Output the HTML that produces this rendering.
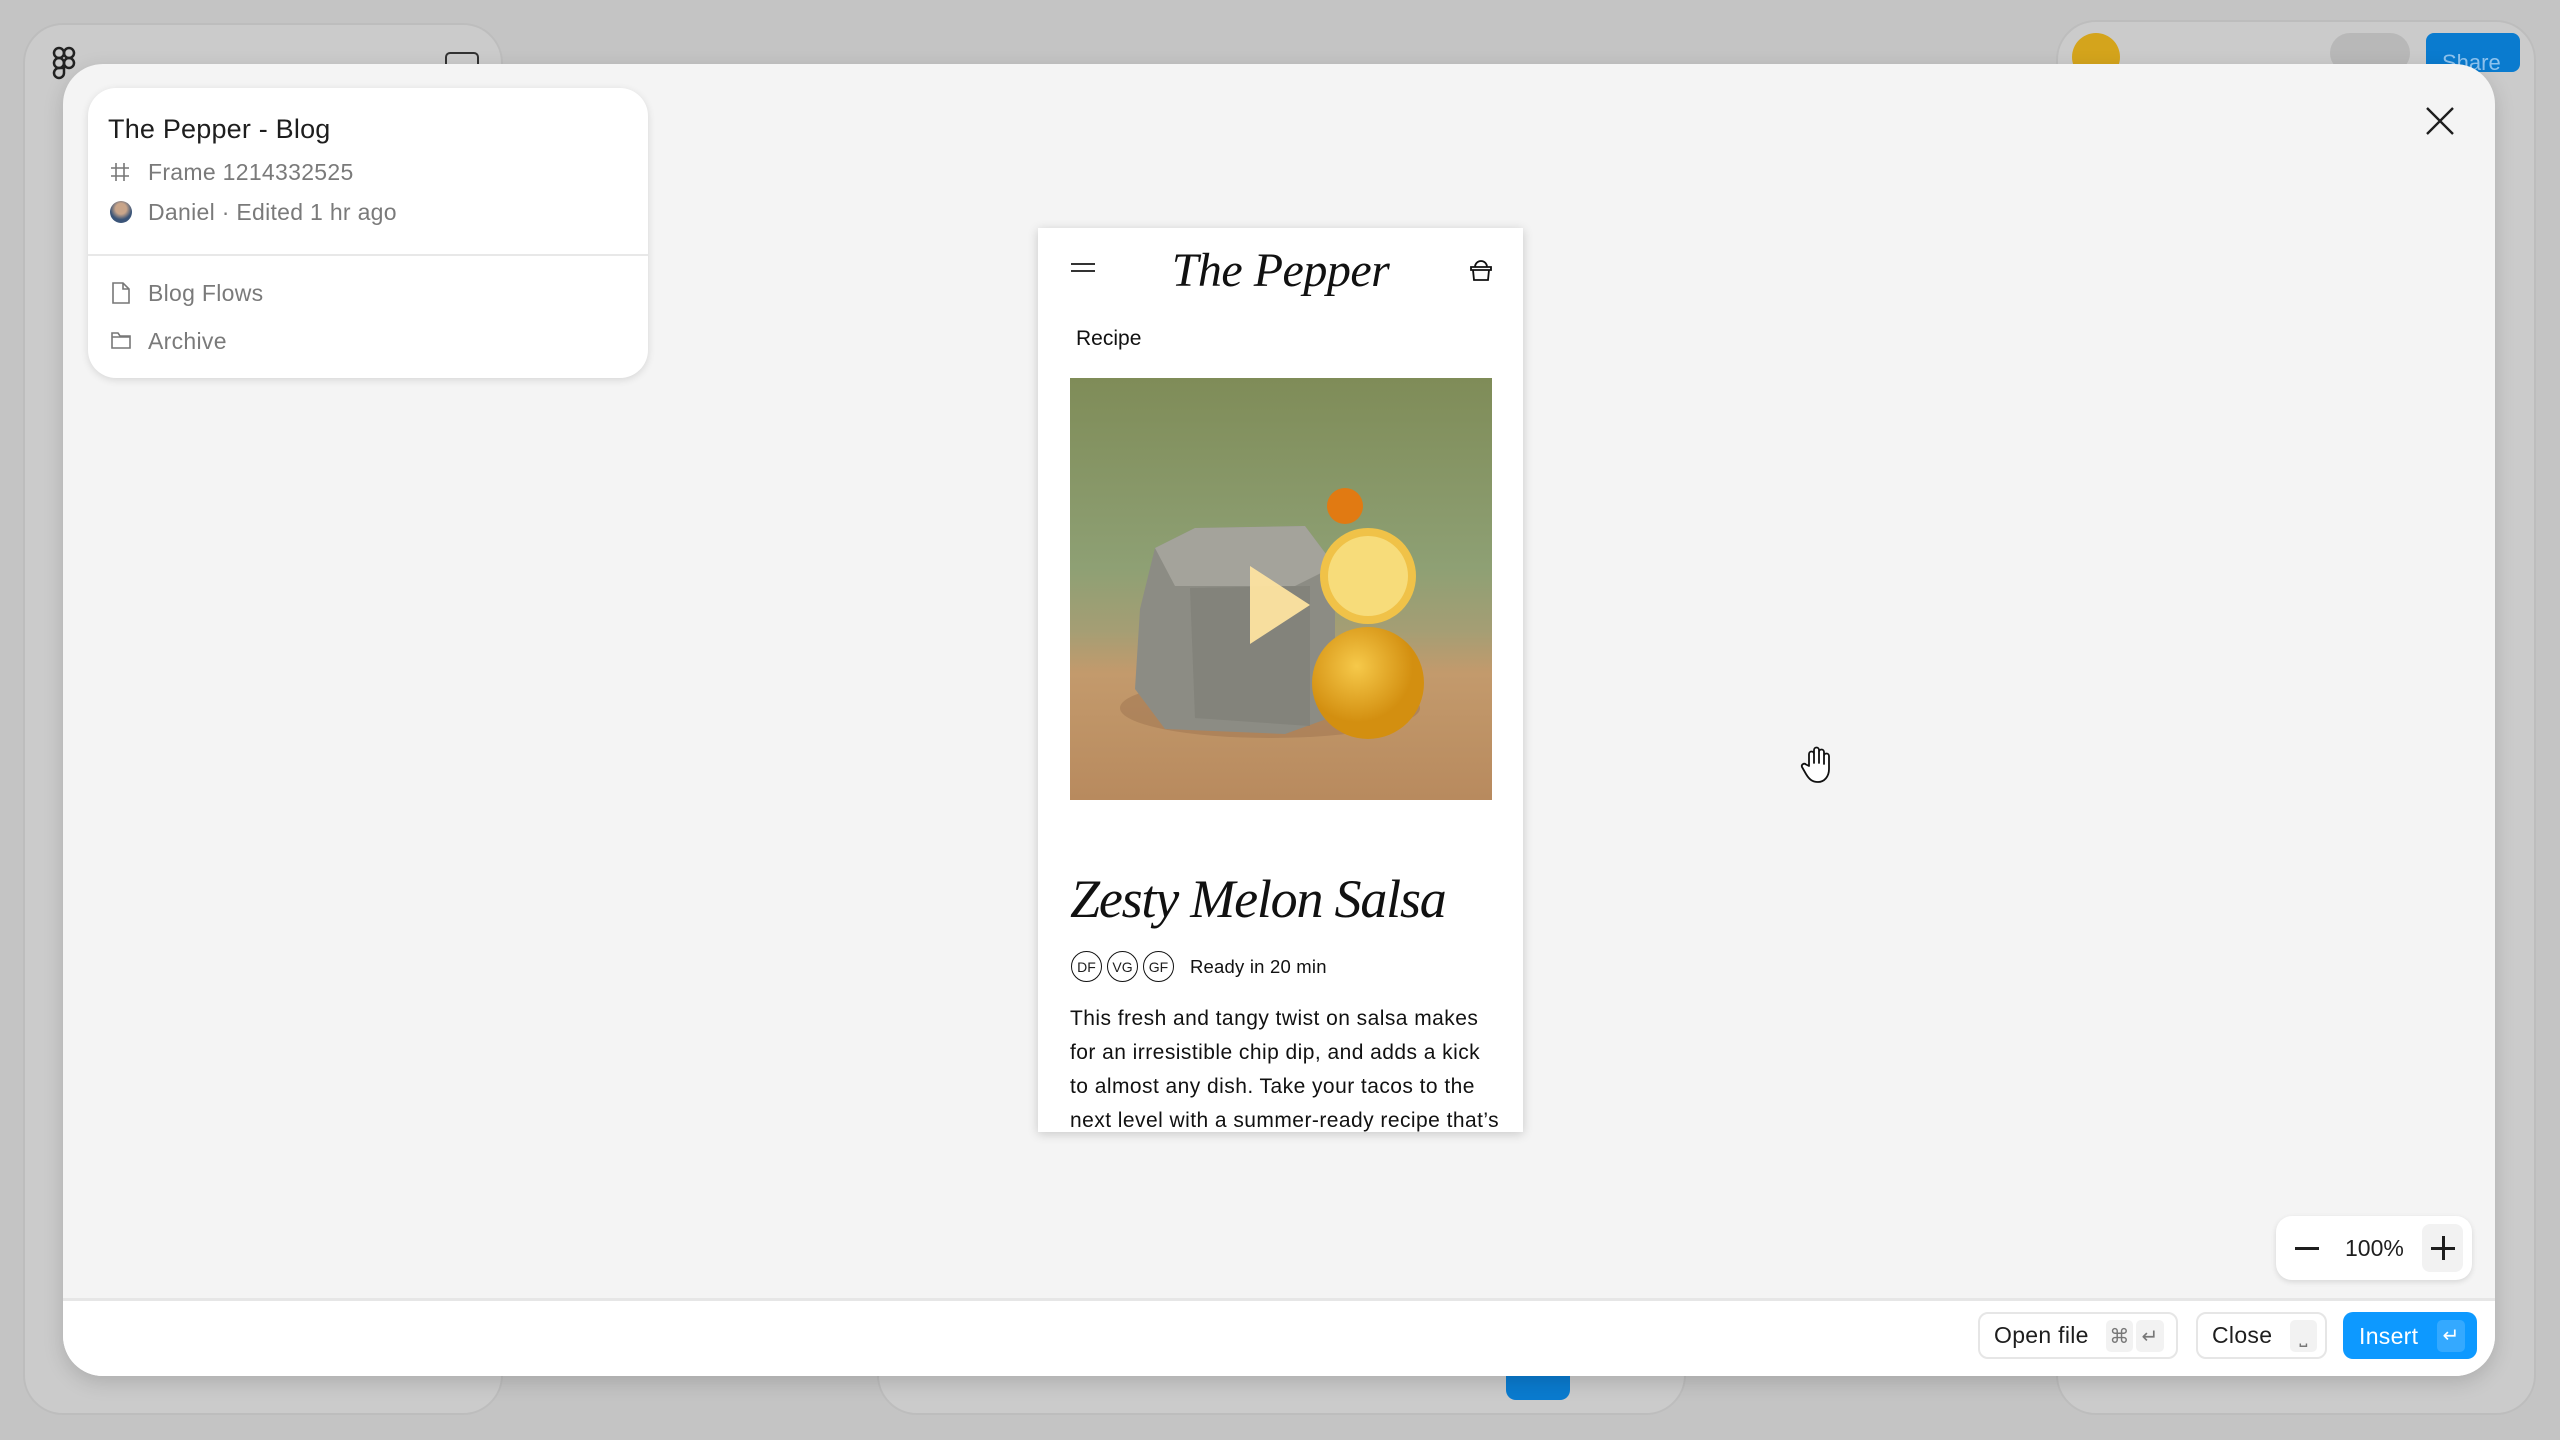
<!DOCTYPE html>
<html><head><meta charset="utf-8"><style>
*{margin:0;padding:0;box-sizing:border-box}
body{width:2560px;height:1440px;background:#c4c4c4;position:relative;overflow:hidden;font-family:"Liberation Sans",sans-serif;color:#1e1e1e}
.abs{position:absolute}
.panel{background:#cbcbcb;border:2px solid #bdbdbd;}
.modal{left:63px;top:64px;width:2432px;height:1312px;background:#f4f4f4;border-radius:40px;overflow:hidden;box-shadow:0 6px 20px rgba(0,0,0,.15)}
.footer{left:0;bottom:0;width:100%;height:78px;background:#fff;border-top:3px solid #e6e6e6}
.card{left:88px;top:88px;width:560px;height:290px;background:#fff;border-radius:28px;box-shadow:0 2px 8px rgba(0,0,0,.12)}
.grey{color:#7a7a7a;font-size:23px;letter-spacing:.3px}
.phone{left:1038px;top:228px;width:485px;height:904px;background:#fff;box-shadow:0 2px 10px rgba(0,0,0,.18);overflow:hidden}
.btn{height:47px;border:2px solid #e6e6e6;border-radius:10px;background:#fff;font-size:23px;display:flex;align-items:center;letter-spacing:.3px}
.key{background:#f2f2f2;border-radius:5px;height:32px;display:flex;align-items:center;justify-content:center;color:#777;font-size:20px}
.badge{width:31px;height:31px;border:1.5px solid #111;border-radius:50%;font-size:14px;display:flex;align-items:center;justify-content:center}
</style></head><body>
<div class="abs panel" style="left:23px;top:23px;width:480px;height:1392px;border-radius:40px"></div>
<svg class="abs" style="left:52px;top:46px" width="26" height="34" viewBox="0 0 26 34"><g fill="none" stroke="#222" stroke-width="2.5"><rect x="2" y="2" width="10" height="10" rx="5"/><rect x="12" y="2" width="10" height="10" rx="5"/><rect x="2" y="12" width="10" height="10" rx="5"/><circle cx="17" cy="17" r="5"/><path d="M2 27a5 5 0 0 0 10 0v-5H7a5 5 0 0 0-5 5z"/></g></svg>
<div class="abs" style="left:445px;top:52px;width:34px;height:20px;border:2.5px solid #333;border-bottom:none;border-radius:5px 5px 0 0"></div>
<div class="abs panel" style="left:2056px;top:20px;width:480px;height:1395px;border-radius:40px"></div>
<div class="abs" style="left:2072px;top:33px;width:48px;height:48px;border-radius:50%;background:#d4a41c"></div>
<div class="abs" style="left:2330px;top:33px;width:80px;height:40px;border-radius:20px;background:#b8b8b8"></div>
<div class="abs" style="left:2426px;top:33px;width:94px;height:39px;border-radius:8px;background:#0a7bcf;color:#8ec3ee;font-size:22px;padding:17px 0 0 16px">Share</div>
<div class="abs panel" style="left:877px;top:1300px;width:809px;height:115px;border-radius:0 0 40px 40px"></div>
<div class="abs" style="left:1506px;top:1340px;width:64px;height:60px;background:#0a7bcf;border-radius:0 0 10px 10px"></div>

<div class="abs modal">
  <div class="abs footer"></div>
  <svg class="abs" style="left:2363px;top:43px" width="28" height="28" viewBox="0 0 28 28"><path d="M1 1L27 27M27 1L1 27" stroke="#1e1e1e" stroke-width="2.4"/></svg>
  <svg class="abs" style="left:1737px;top:680px" width="36" height="40" viewBox="0 0 36 40"><path d="M9 22V10a2.5 2.5 0 0 1 5 0v9V6a2.5 2.5 0 0 1 5 0v13V8a2.5 2.5 0 0 1 5 0v12-8a2.5 2.5 0 0 1 5 0v13c0 8-5 13-11 13s-9-3-12-8l-4-7a2.4 2.4 0 0 1 4-2.5z" fill="#fff" stroke="#111" stroke-width="1.8" stroke-linejoin="round"/></svg>
  <div class="abs" style="left:2213px;top:1152px;width:196px;height:64px;background:#fff;border-radius:16px;box-shadow:0 2px 6px rgba(0,0,0,.12)">
    <div class="abs" style="left:19px;top:31px;width:24px;height:2.5px;background:#1e1e1e"></div>
    <div class="abs" style="left:69px;top:19px;font-size:23px">100%</div>
    <div class="abs" style="left:146px;top:8px;width:41px;height:48px;background:#f2f2f2;border-radius:8px"></div>
    <div class="abs" style="left:155px;top:31px;width:24px;height:2.5px;background:#1e1e1e"></div>
    <div class="abs" style="left:166px;top:20px;width:2.5px;height:24px;background:#1e1e1e"></div>
  </div>
  <div class="abs btn" style="left:1915px;top:1248px;width:200px;padding-left:14px">Open file
    <div class="key" style="position:absolute;left:126px;top:6px;width:27px">⌘</div>
    <div class="key" style="position:absolute;left:156px;top:6px;width:28px">↵</div></div>
  <div class="abs btn" style="left:2133px;top:1248px;width:131px;padding-left:14px">Close
    <div class="key" style="position:absolute;left:92px;top:6px;width:27px">⎵</div></div>
  <div class="abs" style="left:2280px;top:1248px;width:134px;height:47px;border-radius:10px;background:#0d99ff;color:#fff;font-size:23px;padding:11px 0 0 16px;letter-spacing:.3px">Insert
    <div style="position:absolute;left:94px;top:8px;width:28px;height:32px;background:#34a9ff;border-radius:5px;font-size:20px;text-align:center;padding-top:3px">↵</div></div>
</div>

<div class="abs card">
  <div class="abs" style="left:20px;top:26px;font-size:27px;color:#1e1e1e;letter-spacing:.2px">The Pepper - Blog</div>
  <svg class="abs" style="left:23px;top:75px" width="18" height="18" viewBox="0 0 18 18"><path d="M5 0v18M13 0v18M0 5h18M0 13h18" stroke="#777" stroke-width="1.6"/></svg>
  <div class="abs grey" style="left:60px;top:71px">Frame 1214332525</div>
  <div class="abs" style="left:22px;top:113px;width:22px;height:22px;border-radius:50%;background:radial-gradient(circle at 50% 35%,#c9a58a 30%,#3a5478 60%)"></div>
  <div class="abs grey" style="left:60px;top:111px">Daniel · Edited 1 hr ago</div>
  <div class="abs" style="left:0;top:166px;width:100%;height:2px;background:#e8e8e8"></div>
  <svg class="abs" style="left:24px;top:194px" width="18" height="22" viewBox="0 0 18 22"><path d="M1 1h10l6 6v14H1z M11 1v6h6" fill="none" stroke="#777" stroke-width="1.6"/></svg>
  <div class="abs grey" style="left:60px;top:192px">Blog Flows</div>
  <svg class="abs" style="left:23px;top:244px" width="20" height="17" viewBox="0 0 20 17"><path d="M1 1h6l2 3h10v12H1z M1 5h18" fill="none" stroke="#777" stroke-width="1.6"/></svg>
  <div class="abs grey" style="left:60px;top:240px">Archive</div>
</div>

<div class="abs phone">
  <div class="abs" style="left:33px;top:35px;width:24px;height:1.6px;background:#333"></div>
  <div class="abs" style="left:33px;top:42px;width:24px;height:1.6px;background:#333"></div>
  <div class="abs" style="left:0;top:15px;width:485px;text-align:center;font-family:'Liberation Serif',serif;font-style:italic;font-size:48px;color:#111;letter-spacing:-.5px">The Pepper</div>
  <svg class="abs" style="left:430px;top:29px" width="26" height="26" viewBox="0 0 26 26"><path d="M7 10a6 6 0 0 1 12 0M3 10h20v3H3zM5 13l1 10h14l1-10" fill="none" stroke="#111" stroke-width="1.8"/></svg>
  <div class="abs" style="left:38px;top:99px;font-size:21px;color:#111">Recipe</div>
  <svg class="abs" style="left:32px;top:150px" width="422" height="422" viewBox="0 0 422 422">
    <defs>
      <linearGradient id="bg" x1="0" y1="0" x2="0" y2="1"><stop offset="0" stop-color="#7f8c58"/><stop offset=".45" stop-color="#8ea074"/><stop offset=".6" stop-color="#a59e74"/><stop offset=".7" stop-color="#c39a6c"/><stop offset="1" stop-color="#b88a5e"/></linearGradient>
      <radialGradient id="lm" cx=".4" cy=".35"><stop offset="0" stop-color="#f6c94a"/><stop offset="1" stop-color="#d38f10"/></radialGradient>
    </defs>
    <rect width="422" height="422" fill="url(#bg)"/>
    <ellipse cx="200" cy="330" rx="150" ry="30" fill="#9d7350" opacity=".5"/>
    <path d="M85 170l40-20 110-2 30 40 0 150-50 18-120-5-30-40 5-80z" fill="#8c8c84"/>
    <path d="M85 170l40-20 110-2 30 40-40 20-120 0z" fill="#a4a39b"/>
    <path d="M120 210l120-2 0 140-115-8z" fill="#7a7a72" opacity=".5"/>
    <circle cx="298" cy="305" r="56" fill="url(#lm)"/>
    <circle cx="298" cy="198" r="48" fill="#f0c248"/>
    <circle cx="298" cy="198" r="40" fill="#f7dc7a"/>
    <circle cx="275" cy="128" r="18" fill="#e17a12"/>
    <path d="M180 188v78l60-39z" fill="#fde3a0" opacity=".95"/>
  </svg>
  <div class="abs" style="left:32px;top:640px;font-family:'Liberation Serif',serif;font-style:italic;font-size:54px;color:#111;letter-spacing:-1.2px">Zesty Melon Salsa</div>
  <div class="abs badge" style="left:33px;top:723px">DF</div>
  <div class="abs badge" style="left:69px;top:723px">VG</div>
  <div class="abs badge" style="left:105px;top:723px">GF</div>
  <div class="abs" style="left:152px;top:728px;font-size:18.5px;color:#111;letter-spacing:.2px">Ready in 20 min</div>
  <div class="abs" style="left:32px;top:774px;width:430px;font-size:21px;line-height:34px;color:#111;letter-spacing:.45px">This fresh and tangy twist on salsa makes for an irresistible chip dip, and adds a kick to almost any dish. Take your tacos to the next level with a summer-ready recipe that’s</div>
</div>
</body></html>
